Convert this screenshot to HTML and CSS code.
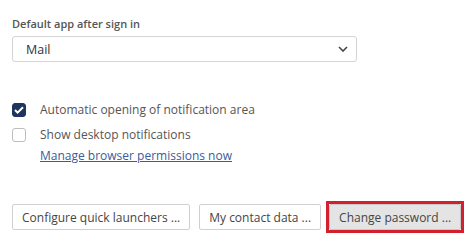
FILE: index.html
```html
<!DOCTYPE html>
<html lang="en">
  <head>
    <meta charset="UTF-8" />
    <title>Settings</title>
    <link rel="stylesheet" href="styles.css">
  </head>
  <body>
    <div class="settings">
      <div class="field">
        <label class="field-label">Default app after sign in</label>
        <div class="select">
          <span class="select-value">Mail</span>
          <svg class="chevron" width="10" height="6" viewBox="0 0 10 6">
            <path d="M1 1l4 4 4-4" fill="none" stroke="#444" stroke-width="1.6" />
          </svg>
        </div>
      </div>

      <div class="options">
        <div class="check-row">
          <span class="check checked">
            <svg width="10" height="8" viewBox="0 0 10 8">
              <path d="M1 4l2.6 2.6L9 1.2" fill="none" stroke="#fff" stroke-width="2" />
            </svg>
          </span>
          <span>Automatic opening of notification area</span>
        </div>
        <div class="check-row">
          <span class="check"></span>
          <span>Show desktop notifications</span>
        </div>
        <a class="link" href="#">Manage browser permissions now</a>
      </div>

      <div class="actions">
        <button class="btn">Configure quick launchers ...</button>
        <button class="btn">My contact data ...</button>
        <span class="highlight"><button class="btn btn-active">Change password ...</button></span>
      </div>
    </div>
  </body>
</html>
```

FILE: styles.css
```css
body {
  margin: 0;
  background: #fff;
  font-family: "Open Sans", "Noto Sans", sans-serif;
  font-size: 12px;
  color: #555;
}

.settings {
  padding: 16px 12px 0 12px;
}

.field-label {
  display: block;
  font-weight: 600;
  font-size: 11px;
  color: #555;
  line-height: 16px;
}

.select {
  margin-top: 4px;
  width: 345px;
  height: 26px;
  box-sizing: border-box;
  border: 1px solid #d4d4d4;
  border-radius: 3px;
  display: flex;
  align-items: center;
  justify-content: space-between;
  padding: 0 8px 0 13px;
  color: #333;
  font-size: 12.5px;
}

.options {
  margin-top: 35px;
}

.check-row {
  display: flex;
  align-items: center;
  gap: 14px;
  height: 25px;
}

.check {
  width: 14px;
  height: 14px;
  box-sizing: border-box;
  border: 1px solid #bdbdbd;
  border-radius: 3px;
  display: flex;
  align-items: center;
  justify-content: center;
}

.check.checked {
  background: #1e3560;
  border-color: #1e3560;
}

.link {
  display: inline-block;
  margin-left: 28px;
  color: #3b5b9b;
  text-decoration: underline;
  line-height: 18px;
}

.actions {
  margin-top: 36px;
  display: flex;
  align-items: center;
  gap: 9px;
}

.btn {
  font-family: inherit;
  font-size: 12px;
  color: #444;
  background: #fff;
  border: 1px solid #d0d0d0;
  border-radius: 2px;
  height: 26px;
  padding: 0 9px;
  white-space: nowrap;
}

.highlight {
  border: 3px solid #d3202f;
  margin-left: -4px;
  display: flex;
}

.btn-active {
  background: #e4e4e4;
  border-color: #c8c8c8;
}
```
